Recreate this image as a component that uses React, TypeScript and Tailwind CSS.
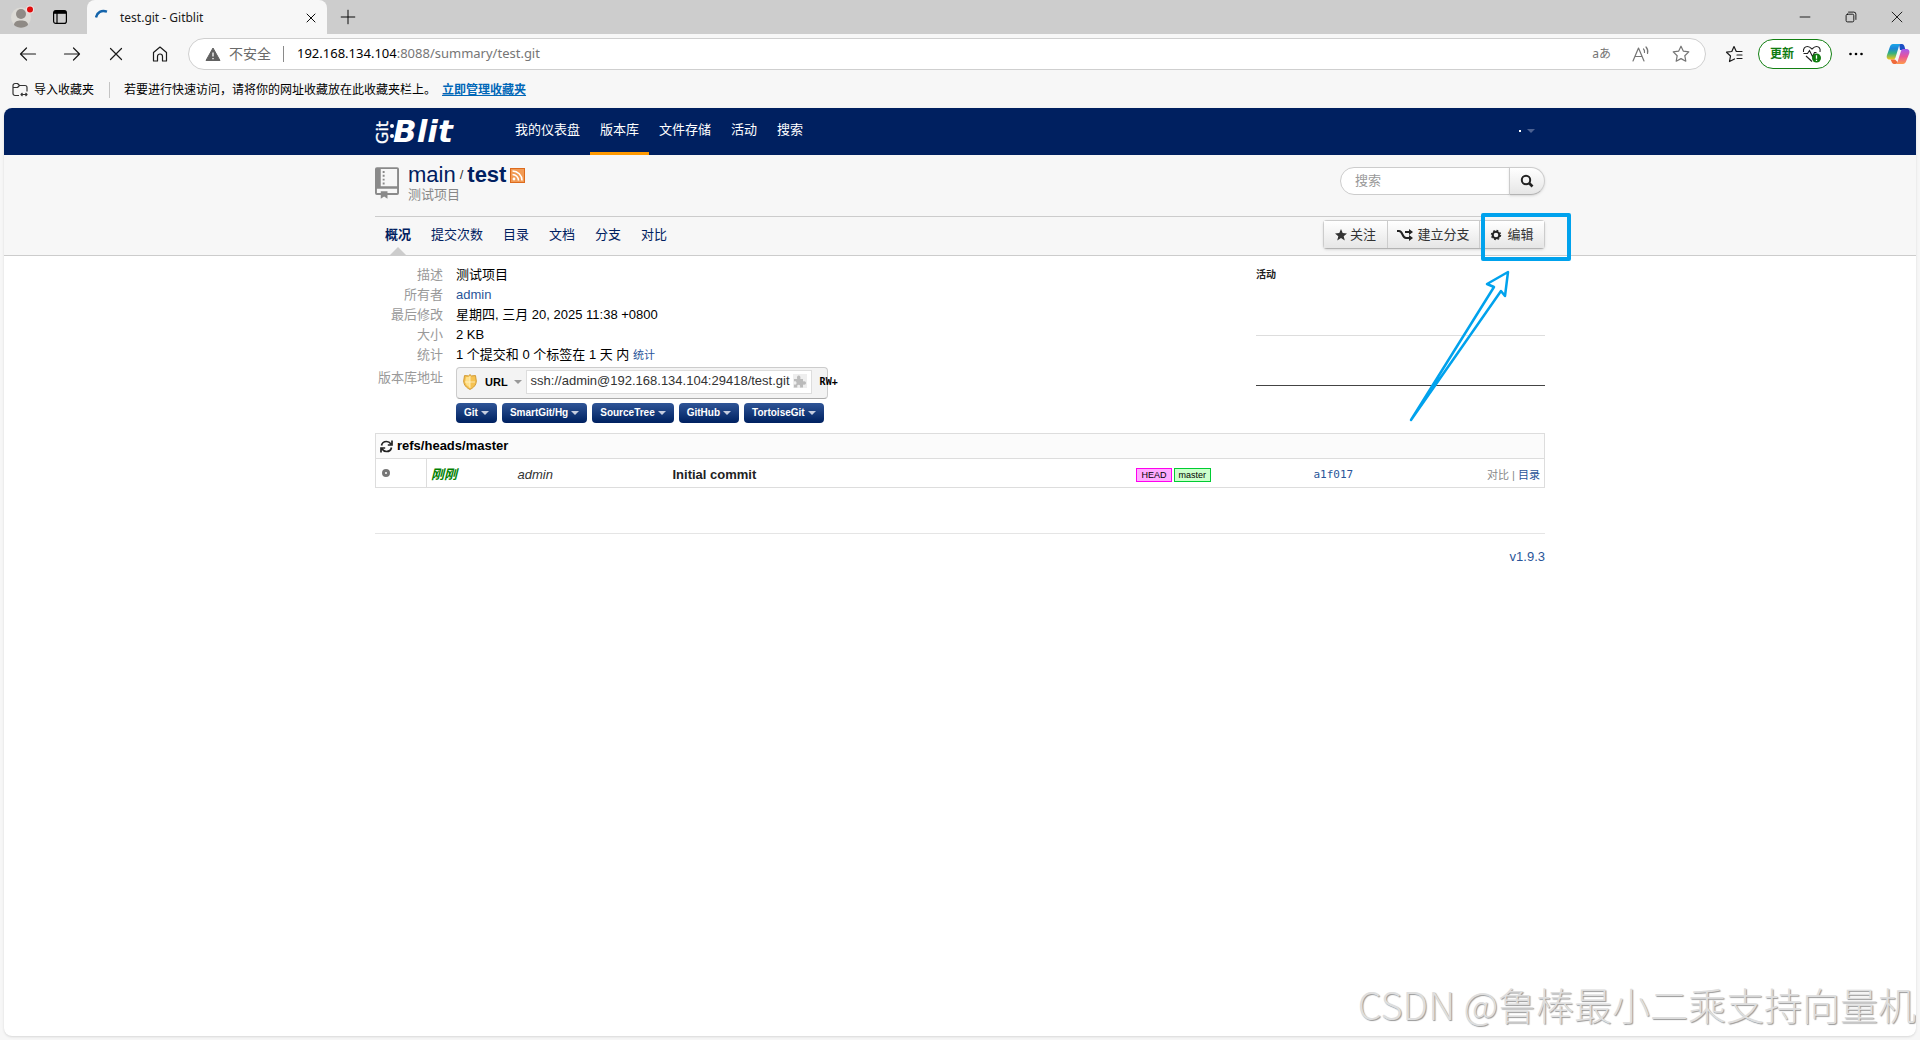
import type { ReactNode } from "react";

const edge = "font-['Noto_Sans','Noto_Sans_CJK_SC',sans-serif]";
const page = "font-['Liberation_Sans','Noto_Sans_CJK_SC',sans-serif]";

function Icon({ children, size = 20, width = 1.2, className = "" }: { children: ReactNode; size?: number; width?: number; className?: string }) {
  return (
    <svg width={size} height={size} viewBox="0 0 20 20" fill="none" stroke="currentColor" strokeWidth={width} strokeLinecap="round" strokeLinejoin="round" className={"shrink-0 " + className} aria-hidden="true">
      {children}
    </svg>
  );
}

const starPath = "M10 2.2l2.4 5 5.4.7-4 3.8 1 5.5L10 14.6l-4.8 2.6 1-5.5-4-3.8 5.4-.7z";

function TabStrip() {
  return (
    <div className="flex h-[34px] items-stretch bg-[#cdcdcd]">
      <div className="flex w-[87px] items-center gap-[18px] pl-[10px]">
        <button aria-label="个人资料" className="h-6 w-6">
          <svg width="24" height="24" viewBox="0 0 24 24" aria-hidden="true">
            <circle cx="11" cy="12.500" r="10" fill="#dcdad5" />
            <circle cx="11" cy="9" r="5" fill="#8f8a85" />
            <path d="M4 20c0-3.200 3-4.500 7-4.500s7 1.300 7 4.500c-2 2-4.500 2.700-7 2.700S6 22 4 20z" fill="#8f8a85" />
            <circle cx="20" cy="4.500" r="4" fill="#f2dede" />
            <circle cx="20" cy="4.500" r="3" fill="#e00b0b" />
          </svg>
        </button>
        <button aria-label="标签页操作" className="text-black">
          <svg width="16" height="16" viewBox="0 0 16 16" fill="none" stroke="currentColor" strokeWidth="1.200" aria-hidden="true">
            <rect x="1.600" y="1.600" width="12.800" height="12.800" rx="2.200" />
            <path d="M2 3.300h12" strokeWidth="3" />
            <path d="M5 3v11" />
          </svg>
        </button>
      </div>
      <div className="-mb-px flex w-60 items-center rounded-t-lg bg-[#f7f7f7] pl-2 pr-[6px]">
        <svg width="16" height="16" viewBox="0 0 16 16" fill="none" stroke="#1464ab" strokeWidth="2.400" className="-mt-1" aria-hidden="true">
          <path d="M1 9.500C2 4 6.500 1.800 12 3.600" />
        </svg>
        <span className="ml-[9px] flex-1 text-xs text-[#1b1b1b]">test.git - Gitblit</span>
        <button aria-label="关闭标签页" className="flex h-5 w-5 items-center justify-center">
          <Icon size={16}><path d="M5 5l10 10M15 5L5 15" /></Icon>
        </button>
      </div>
      <button aria-label="新建标签页" className="ml-[9px] flex w-6 items-center justify-center">
        <Icon size={16}><path d="M10 1.500v17M1.500 10h17" /></Icon>
      </button>
      <div className="ml-auto flex">
        <button aria-label="最小化" className="flex w-[46px] items-center justify-center"><Icon size={14}><path d="M3 10h14" /></Icon></button>
        <button aria-label="还原" className="flex w-[46px] items-center justify-center">
          <Icon size={14}><rect x="3" y="6" width="11" height="11" rx="2" /><path d="M6.500 3H14a3 3 0 013 3v7.500" /></Icon>
        </button>
        <button aria-label="关闭" className="flex w-[46px] items-center justify-center"><Icon size={14}><path d="M3 3l14 14M17 3L3 17" /></Icon></button>
      </div>
    </div>
  );
}

function Copilot() {
  return (
    <svg width="24" height="22" viewBox="0 0 24 22" aria-hidden="true">
      <defs>
        <linearGradient id="cpl" x1="0" y1="0" x2="0" y2="1"><stop offset="0" stopColor="#1ba7e8" /><stop offset=".3" stopColor="#1b86d8" /><stop offset=".6" stopColor="#36b27c" /><stop offset="1" stopColor="#f5c518" /></linearGradient>
        <linearGradient id="cpr" x1="0" y1="0" x2="0" y2="1"><stop offset="0" stopColor="#a35cf0" /><stop offset=".5" stopColor="#e8559a" /><stop offset="1" stopColor="#ff9a4a" /></linearGradient>
      </defs>
      <path d="M13 1h3c1.300 0 2 1 2.500 2.500L19.500 7H14z" fill="#1b4fc4" />
      <path d="M7 1h8c-1 0-1.700 1-2 2l-3.500 11.500C9 16 8 16.500 6.500 16.500H4C1 16.500.2 14.500 1 12L4 3.500C4.600 2 5.500 1 7 1z" fill="url(#cpl)" />
      <path d="M17 21H9.500c1 0 1.500-1 2-2L15 8c.5-1.500 1.300-2 3-2h2c3 0 4 2 3.200 4.500L20 18.500c-.6 1.500-1.500 2.500-3 2.500z" fill="url(#cpr)" />
      <path d="M4.500 16.500H9L11.500 19c-.5 1-1 2-2 2H8c-1.300 0-2-1-2.500-2.500z" fill="#ef6a3a" />
    </svg>
  );
}

function Toolbar() {
  return (
    <div className="flex h-10 items-center pl-[18px] pr-[10px] text-[#1b1b1b]">
      <div className="flex items-center gap-6">
        <button aria-label="后退"><Icon><path d="M17.500 10h-15M8.500 4l-6 6 6 6" /></Icon></button>
        <button aria-label="前进"><Icon><path d="M2.500 10h15M11.500 4l6 6-6 6" /></Icon></button>
        <button aria-label="停止"><Icon><path d="M4.500 4.500l11 11M15.500 4.500l-11 11" /></Icon></button>
        <button aria-label="主页"><Icon><path d="M3.500 8.500L10 3l6.500 5.500V17h-4v-4.500a2.500 2.500 0 00-5 0V17h-4z" /></Icon></button>
      </div>
      <div className="ml-[18px] flex h-8 flex-1 items-center rounded-full border border-[#cfcfcf] bg-white pl-4 pr-[14px]">
        <svg width="16" height="16" viewBox="0 0 16 16" aria-hidden="true">
          <path d="M8 2l7 12.500H1z" fill="#616161" stroke="#616161" strokeLinejoin="round" />
          <path d="M8 6.500v4M8 12v1.300" stroke="#fff" strokeWidth="1.300" />
        </svg>
        <span className="ml-2 text-sm text-[#6a6a6a]">不安全</span>
        <span className="ml-3 mr-[13px] h-4 w-px bg-[#8a8a8a]" />
        <a href="#address" className="flex-1 text-[13px] text-[#767676]"><span className="text-black">192.168.134.104</span>:8088/summary/test.git</a>
        <div className="flex items-center gap-5 text-[#757575]">
          <button aria-label="翻译" className="text-xs">aあ</button>
          <button aria-label="朗读">
            <Icon><path d="M2 17L7.500 4 13 17M4 12.500h7M12.500 5c1 1 1.200 2.200 1 3.500M15 3c1.800 2 2.200 4 1.500 6.500" /></Icon>
          </button>
          <button aria-label="收藏"><Icon><path d={starPath} /></Icon></button>
        </div>
      </div>
      <button aria-label="收藏夹" className="ml-[18px]"><Icon><path d="M10.500 15l-5 2.500 1-5.500-4-3.800 5.300-.7L10 2.500l2.300 5H18M13 11h5M13 14.500h5" /></Icon></button>
      <button className="ml-[14px] flex h-[30px] w-[74px] items-center justify-between rounded-full border border-[#138013] bg-white pl-[11px] pr-[9px]">
        <span className="text-xs font-bold text-[#107c10]">更新</span>
        <svg width="20" height="20" viewBox="0 0 20 20" fill="none" stroke="#222" strokeWidth="1.100" aria-hidden="true">
          <path d="M1.500 8C1 4.500 3 2.500 5.500 2.500c2 0 3.500 1.500 4.500 2.500 1-1 2.500-2.500 4.500-2.500C17 2.500 18.700 4.500 18 8M1.500 9.500h4l2-3 3 6 2-4h2M4 12l6 5.500" />
          <circle cx="14.500" cy="14" r="4.500" fill="#107c10" stroke="none" />
          <path d="M14.500 11.200v3.600M14.500 15.700v1.200" stroke="#fff" strokeWidth="1.300" />
        </svg>
      </button>
      <button aria-label="设置及其他" className="ml-4">
        <svg width="16" height="16" viewBox="0 0 16 16" aria-hidden="true"><circle cx="2.500" cy="8" r="1.300" /><circle cx="8" cy="8" r="1.300" /><circle cx="13.500" cy="8" r="1.300" /></svg>
      </button>
      <button aria-label="Copilot" className="ml-[22px]"><Copilot /></button>
    </div>
  );
}

function FavoritesBar() {
  return (
    <div className="flex h-[34px] items-center pb-0.5 pl-3 text-xs text-black">
      <button className="flex items-center gap-[6px]">
        <svg width="16" height="16" viewBox="0 0 16 16" fill="none" stroke="#333" strokeWidth="1.200" strokeLinejoin="round" aria-hidden="true">
          <path d="M7 13.500H3a2 2 0 01-2-2v-8a2 2 0 012-2h2.500l2 2H13a2 2 0 012 2v4M1 5.500h4.500l2-2M9 12.500h6M10.500 11L9 12.500l1.500 1.500M13.500 11l1.500 1.500-1.500 1.500" />
        </svg>
        导入收藏夹
      </button>
      <span className="ml-[15px] mr-[14px] h-4 w-px bg-[#c4c4c4]" />
      <span>若要进行快速访问，请将你的网址收藏放在此收藏夹栏上。</span>
      <a href="#manage" className="ml-[6px] font-bold text-[#0067b8] underline">立即管理收藏夹</a>
    </div>
  );
}

function Logo() {
  return (
    <svg width="90" height="42" viewBox="0 0 90 42" fill="#fff" role="img" aria-label="Gitblit" fontFamily="'DejaVu Sans'" fontWeight="bold" className="overflow-visible">
      <text x="18" y="31" fontSize="31" fontStyle="oblique">Blit</text>
      <text x="0" y="0" fontSize="16" fontWeight="normal" stroke="#fff" strokeWidth=".3" transform="translate(13 33) rotate(-90)">Git</text>
      <circle cx="17" cy="15" r="2" />
      <circle cx="17" cy="25" r="2" />
    </svg>
  );
}

function Caret({ className }: { className: string }) {
  return <span className={"inline-block h-0 w-0 border-x-4 border-t-4 border-x-transparent " + className} />;
}

function TopNav() {
  const items = ["我的仪表盘", "版本库", "文件存储", "活动", "搜索"];
  return (
    <header className="bg-[#002060] text-white">
      <div className="mx-auto flex h-[47px] w-full max-w-[1170px] items-stretch">
        <a href="#home" className="flex w-[130px] items-center"><Logo /></a>
        <nav className="flex">
          {items.map((t, i) => (
            <a key={t} href="#nav" className={i === 1 ? "flex items-center border-b-[3px] border-[#ff9900] px-[10px] pb-px" : "flex items-center px-[10px] pb-1"}>{t}</a>
          ))}
        </nav>
        <button aria-label="用户菜单" className="ml-auto mr-[10px] flex items-center gap-[6px] pb-0.5">
          <span className="h-0.5 w-0.5 bg-white" />
          <Caret className="border-t-[#4c6191]" />
        </button>
      </div>
    </header>
  );
}

function RepoIcon() {
  return (
    <svg width="24" height="32" viewBox="0 0 25 33" fill="#8a8a8a" aria-hidden="true">
      <path fillRule="evenodd" d="M2 0h21a2 2 0 012 2v25a2 2 0 01-2 2H13v4l-3.500-2.500L6 33v-4H2a2 2 0 01-2-2V2a2 2 0 012-2zm4 2v18h17V2zM2 22.500v4.500h4v-2h7v2h10v-4.500z" />
      <path d="M8 4h2v2H8zM8 8h2v2H8zM8 12h2v2H8zM8 16h2v2H8z" />
    </svg>
  );
}

const actionBtn = "flex h-[27px] items-center justify-center whitespace-nowrap bg-gradient-to-b from-white to-[#e6e6e6] text-[#333]";

function RepoHeader() {
  const tabs = ["提交次数", "目录", "文档", "分支", "对比"];
  return (
    <div className="border-b border-[#ccc] bg-[#f7f7f7]">
      <div className="mx-auto w-full max-w-[1170px]">
        <div className="flex h-[62px] items-start justify-between border-b border-[#ccc] pt-3">
          <div className="flex">
            <RepoIcon />
            <div className="-mt-1 ml-[9px]">
              <div className="flex items-center text-[22px] leading-6 text-[#002060]">
                <a href="#main">main</a>
                <span className="mx-1 text-[13px] text-[#333]">/</span>
                <a href="#test" className="font-bold">test</a>
                <a href="#rss" aria-label="RSS" className="ml-1">
                  <svg width="15" height="15" viewBox="0 0 15 15" fill="none" aria-hidden="true">
                    <rect x=".5" y=".5" width="14" height="14" fill="#f29b55" stroke="#dd6b1d" />
                    <circle cx="4" cy="11" r="1.400" fill="#fff" />
                    <path d="M2.500 6.500a6 6 0 016 6M2.500 3a9.500 9.500 0 019.500 9.500" stroke="#fff" strokeWidth="1.600" />
                  </svg>
                </a>
              </div>
              <div className="leading-4 text-[#888]">测试项目</div>
            </div>
          </div>
          <form className="flex h-7 w-[205px]" onSubmit={(e) => e.preventDefault()}>
            <input aria-label="搜索" placeholder="搜索" className="min-w-0 flex-1 rounded-l-full border border-[#ccc] bg-white px-[14px] placeholder:text-[#999]" />
            <button aria-label="提交搜索" className="-ml-px flex w-9 items-center justify-center rounded-r-full border border-[#ccc] border-b-[#b3b3b3] bg-gradient-to-b from-white to-[#e6e6e6] shadow-sm">
              <svg width="14" height="14" viewBox="0 0 14 14" fill="none" stroke="#222" aria-hidden="true"><circle cx="6" cy="6" r="4.200" strokeWidth="2" /><path d="M9 9l3.500 3.500" strokeWidth="2.600" /></svg>
            </button>
          </form>
        </div>
        <div className="flex h-[38px] items-start justify-between">
          <nav className="flex h-full items-start text-[#002060]">
            <a href="#summary" className="relative flex h-full items-start px-[10px] pt-2 font-bold leading-5">
              概况
              <span className="absolute bottom-0 left-1/2 h-0 w-0 -translate-x-1/2 border-x-8 border-b-8 border-x-transparent border-b-[#ccc]" />
            </a>
            {tabs.map((t) => <a key={t} href="#tab" className="px-[10px] pt-2 leading-5">{t}</a>)}
          </nav>
          <div className="relative mt-[3px] flex rounded-sm border border-[#ccc] border-b-[#b3b3b3] shadow-sm">
            <button className={actionBtn + " w-16 gap-[3px] border-r border-[#ccc]"}>
              <svg width="12" height="12" viewBox="0 0 20 20" fill="#333" aria-hidden="true"><path d="M10 0l2.800 6.800 7.200.5-5.500 4.600 1.800 7.100-6.300-3.900L3.700 19l1.800-7.100L0 7.300l7.200-.5z" /></svg>
              关注
            </button>
            <button className={actionBtn + " w-[92px] gap-1 border-r border-[#ccc]"}>
              <svg width="16" height="12" viewBox="0 0 16 12" fill="none" stroke="#222" strokeWidth="2" aria-hidden="true">
                <path d="M0 2h2c4 0 3 7 7 7h4M8 3h5" /><path d="M12 0l4 3-4 3zM12 6l4 3-4 3z" fill="#222" stroke="none" />
              </svg>
              建立分支
            </button>
            <button className={actionBtn + " w-16 gap-[5px]"}>
              <svg width="12" height="12" viewBox="0 0 12 12" fill="none" stroke="#222" aria-hidden="true"><circle cx="6" cy="6" r="3.300" strokeWidth="2" /><circle cx="6" cy="6" r="4.600" strokeWidth="1.200" strokeDasharray="1.800 1.813" /></svg>
              编辑
            </button>
            <Annotation />
          </div>
        </div>
      </div>
    </div>
  );
}

function Annotation() {
  return (
    <svg width="92" height="212" viewBox="0 0 92 212" fill="none" stroke="#00a2ed" strokeLinejoin="round" className="pointer-events-none absolute -right-7 -top-[10px] z-10 overflow-visible" aria-hidden="true">
      <rect x="3" y="4" width="86" height="44" strokeWidth="4" />
      <path d="M-69 209L14 76l-7-3 21-12-3 24-4-5z" strokeWidth="2.500" />
    </svg>
  );
}

function Row({ label, children }: { label: string; children: ReactNode }) {
  return (
    <tr className="h-5 align-top">
      <th scope="row" className="w-[68px] whitespace-nowrap p-0 text-right font-normal text-[#999]">
        <span className={label === "版本库地址" ? "block pt-[3px]" : "block"}>{label}</span>
      </th>
      <td className="p-0 pl-[13px] text-black">{children}</td>
    </tr>
  );
}

function Shield() {
  return (
    <svg width="14" height="16" viewBox="0 0 14 16" className="shrink-0" aria-hidden="true">
      <path d="M7 .6l1.500 1.300 4-.3.800 5.400c0 4-3 7-6.300 8.400C3.700 14 .7 11 .7 7l.8-5.400 4 .3z" fill="#f6c251" stroke="#d19a34" />
      <path d="M7 2.500v11c-3-1.500-4.600-3.500-4.600-6.300L3 3.300z" fill="#ffe08a" />
      <path d="M7 2v12M2 8h10" stroke="#fff3c8" strokeWidth=".8" />
    </svg>
  );
}

function Summary() {
  const apps = ["Git", "SmartGit/Hg", "SourceTree", "GitHub", "TortoiseGit"];
  return (
    <section className="flex items-start justify-between pt-[9px] leading-5">
      <div>
        <table className="border-collapse">
          <tbody>
            <Row label="描述">测试项目</Row>
            <Row label="所有者"><a href="#admin" className="text-[#2a5599]">admin</a></Row>
            <Row label="最后修改">星期四, 三月 20, 2025 11:38 +0800</Row>
            <Row label="大小">2 KB</Row>
            <Row label="统计">1 个提交和 0 个标签在 1 天 内 <a href="#stats" className="text-[11px] text-[#2a5599]">统计</a></Row>
            <Row label="版本库地址">
              <div className="mt-0.5 flex h-8 w-[372px] items-center rounded border border-[#ccc] border-b-[#aaa] bg-[#f3f3f3] pb-0.5 pl-[6px]">
                <Shield />
                <button className="ml-2 flex shrink-0 items-center gap-[6px] text-[11px] font-bold">URL <Caret className="border-t-[#999]" /></button>
                <div className="ml-1 flex h-6 w-[286px] shrink-0 items-center border border-[#ddd] bg-white pb-0.5 pl-1 text-[#333]">
                  <span className="whitespace-nowrap">ssh://admin@192.168.134.104:29418/test.git</span>
                  <span className="ml-[3px] flex h-[14px] w-[14px] items-center justify-center bg-[#eee]">
                    <svg width="13" height="13" viewBox="0 0 13 13" fill="#bbb" aria-hidden="true"><path d="M1 4h3.200C3.500 1.800 4.500.5 5.700.5S8 1.800 7.300 4H10v2.500c2-.7 3 .2 3 1.400s-1 2.200-3 1.500V12.500H7c.5-2-.2-2.700-1.300-2.700s-1.900.7-1.300 2.700H1V9.500c1.800.5 2.500-.3 2.500-1.500S2.800 6 1 6.500z" /></svg>
                  </span>
                </div>
                <span className="ml-2 shrink-0 font-['DejaVu_Sans_Mono',monospace] text-[10px] font-bold">RW+</span>
              </div>
              <div className="mt-1 flex gap-[5px]">
                {apps.map((a) => (
                  <button key={a} className="flex h-5 items-center gap-[3px] rounded-sm bg-gradient-to-b from-[#2f5597] to-[#002060] px-2 text-[10px] font-bold text-white">
                    {a} <Caret className="border-t-[#c5cde0]" />
                  </button>
                ))}
              </div>
            </Row>
          </tbody>
        </table>
      </div>
      <div className="w-[289px] text-[10px] font-bold text-[#222]">
        活动
        <div className="mt-[50px] h-px bg-[#ddd]" />
        <div className="mt-[49px] h-px bg-[#444]" />
      </div>
    </section>
  );
}

function Commits() {
  return (
    <table className="mt-[10px] w-full table-fixed border-collapse border border-[#ddd]">
      <colgroup><col className="w-[51px]" /><col className="w-[86px]" /><col className="w-[155px]" /><col /><col className="w-[177px]" /><col className="w-[136px]" /><col className="w-[96px]" /></colgroup>
      <thead>
        <tr className="h-[25px] border-b border-[#ddd] bg-[#fbfbfb]">
          <th colSpan={7} className="px-1 text-left text-black">
            <a href="#refs" className="flex items-center gap-1">
              <svg width="13" height="13" viewBox="0 0 13 13" fill="none" stroke="#222" strokeWidth="1.700" aria-hidden="true"><path d="M1.500 5.500C2 3 4 1.500 6.500 1.500c2 0 3.300.8 4.500 2.500M11.500 7.500c-.5 2.500-2.500 4-5 4-2 0-3.300-.8-4.500-2.500M12 .5V5H7.800M1 12.500V8h4.200" /></svg>
              refs/heads/master
            </a>
          </th>
        </tr>
      </thead>
      <tbody>
        <tr className="h-[29px]">
          <td className="border-r border-[#ddd] pl-[6px]"><span className="block h-2 w-2 rounded-full border-[3px] border-[#777]" /></td>
          <td className="pl-1 pt-1 font-bold italic text-[#008000]">刚刚</td>
          <td className="pl-[5px] pt-1 italic text-[#333]">admin</td>
          <td className="pl-[5px] pt-1 font-bold text-[#222]">Initial commit</td>
          <td className="pl-px pt-1">
            <span className="flex gap-0.5 text-[9px] leading-3 text-black">
              <a href="#head" className="border border-[#ff00ee] bg-[#ffaaff] px-1">HEAD</a>
              <a href="#master" className="border border-[#00cc33] bg-[#ccffcc] px-1">master</a>
            </span>
          </td>
          <td className="pl-px pt-1 font-['DejaVu_Sans_Mono',monospace] text-[11px]"><a href="#commit" className="text-[#2a5599]">a1f017</a></td>
          <td className="whitespace-nowrap pr-1 pt-1 text-right text-[11px] text-[#888]">对比 | <a href="#tree" className="text-[#2a5599]">目录</a></td>
        </tr>
      </tbody>
    </table>
  );
}

export default function App() {
  return (
    <div className={"flex min-h-screen flex-col bg-[#f7f7f7] " + edge}>
      <TabStrip />
      <Toolbar />
      <FavoritesBar />
      <main className={"relative mx-1 mb-1 flex flex-1 flex-col overflow-hidden rounded-lg bg-white text-[13px] leading-5 shadow " + page}>
        <TopNav />
        <RepoHeader />
        <div className="mx-auto w-full max-w-[1170px]">
          <Summary />
          <Commits />
          <footer className="mt-[45px] border-t border-[#e5e5e5] pt-[13px] text-right leading-5"><a href="#version" className="text-[#2a5599]">v1.9.3</a></footer>
        </div>
        <div className="pointer-events-none absolute bottom-1 right-0 whitespace-nowrap font-['Noto_Sans_CJK_SC',sans-serif] text-[38px] font-light leading-[56px] text-[#dedede] [text-shadow:1px_1px_1px_#999]">CSDN @鲁棒最小二乘支持向量机</div>
      </main>
    </div>
  );
}
